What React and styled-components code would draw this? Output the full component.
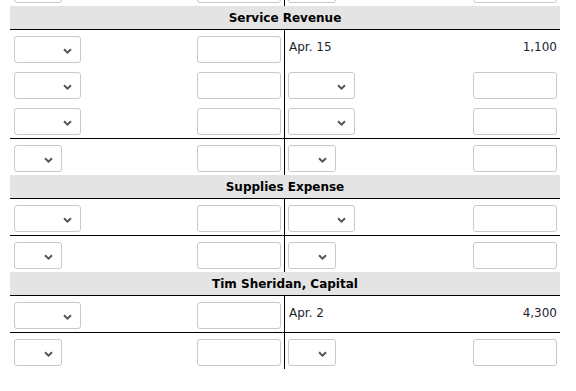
import React from 'react';
import styled, { createGlobalStyle } from 'styled-components';

const Global = createGlobalStyle`
  html, body { margin: 0; padding: 0; background: #fff; }
  body { font-family: "DejaVu Sans", Verdana, sans-serif; }
  *, *::before, *::after { box-sizing: border-box; }
`;

const Viewport = styled.div`
  height: 391px;
  overflow: hidden;
`;

const Ledger = styled.div`
  margin: -31px 0 0 10px;
  width: 550px;
`;

const Header = styled.div`
  height: 24px;
  background: #e4e4e4;
  border-bottom: 1px solid #000;
  display: flex;
  align-items: center;
  justify-content: center;
  font-weight: bold;
  font-size: 12px;
  color: #000;
`;

const Row = styled.div`
  display: grid;
  grid-template-columns: 275px 275px;
  border-top: ${p => (p.$ruled ? '1px solid #000' : '0')};
`;

const Cell = styled.div`
  display: flex;
  justify-content: space-between;
  align-items: flex-start;
  padding: 6px 3px 3px ${p => (p.$side === 'left' ? 4 : 3)}px;
  border-right: ${p => (p.$side === 'left' ? '1px solid #000' : '0')};
`;

const Posted = styled.span`
  font-size: 12px;
  color: #1e1e2e;
  padding: 4px 0 0 1px;
`;

const Amount = styled.span`
  font-size: 12px;
  color: #1e1e2e;
  padding-top: 4px;
`;

const SelectBox = styled.div`
  position: relative;
  width: ${p => (p.$wide ? 67 : 48)}px;
  height: 27px;
  border: 1px solid #c9c9c9;
  border-radius: 3px;
  background: #fff;
`;

const Chevron = styled.svg`
  position: absolute;
  right: 8px;
  top: 11px;
`;

const AmountInput = styled.div`
  width: 84px;
  height: 27px;
  border: 1px solid #c9c9c9;
  border-radius: 3px;
  background: #fff;
`;

const Select = ({ wide }) => (
  <SelectBox $wide={wide}>
    <Chevron width="9" height="6" viewBox="0 0 9 6">
      <path d="M1 1.2 L4.5 4.6 L8 1.2" fill="none" stroke="#555" strokeWidth="2" />
    </Chevron>
  </SelectBox>
);

const EntrySide = ({ side, wide, text, amount }) => (
  <Cell $side={side}>
    {text ? (
      <>
        <Posted>{text}</Posted>
        <Amount>{amount}</Amount>
      </>
    ) : (
      <>
        <Select wide={wide} />
        <AmountInput />
      </>
    )}
  </Cell>
);

const sections = [
  {
    title: 'Service Revenue',
    rows: [
      { left: { wide: true }, right: { text: 'Apr. 15', amount: '1,100' } },
      { left: { wide: true }, right: { wide: true } },
      { left: { wide: true }, right: { wide: true } },
      { ruled: true, left: { wide: false }, right: { wide: false } },
    ],
  },
  {
    title: 'Supplies Expense',
    rows: [
      { left: { wide: true }, right: { wide: true } },
      { ruled: true, left: { wide: false }, right: { wide: false } },
    ],
  },
  {
    title: 'Tim Sheridan, Capital',
    rows: [
      { left: { wide: true }, right: { text: 'Apr. 2', amount: '4,300' } },
      { ruled: true, left: { wide: false }, right: { wide: false } },
    ],
  },
];

export default function App() {
  return (
    <>
      <Global />
      <Viewport>
        <Ledger>
          <Row $ruled>
            <EntrySide side="left" wide={false} />
            <EntrySide side="right" wide={false} />
          </Row>
          {sections.map(s => (
            <section key={s.title}>
              <Header>{s.title}</Header>
              {s.rows.map((r, i) => (
                <Row key={i} $ruled={r.ruled}>
                  <EntrySide side="left" {...r.left} />
                  <EntrySide side="right" {...r.right} />
                </Row>
              ))}
            </section>
          ))}
        </Ledger>
      </Viewport>
    </>
  );
}
